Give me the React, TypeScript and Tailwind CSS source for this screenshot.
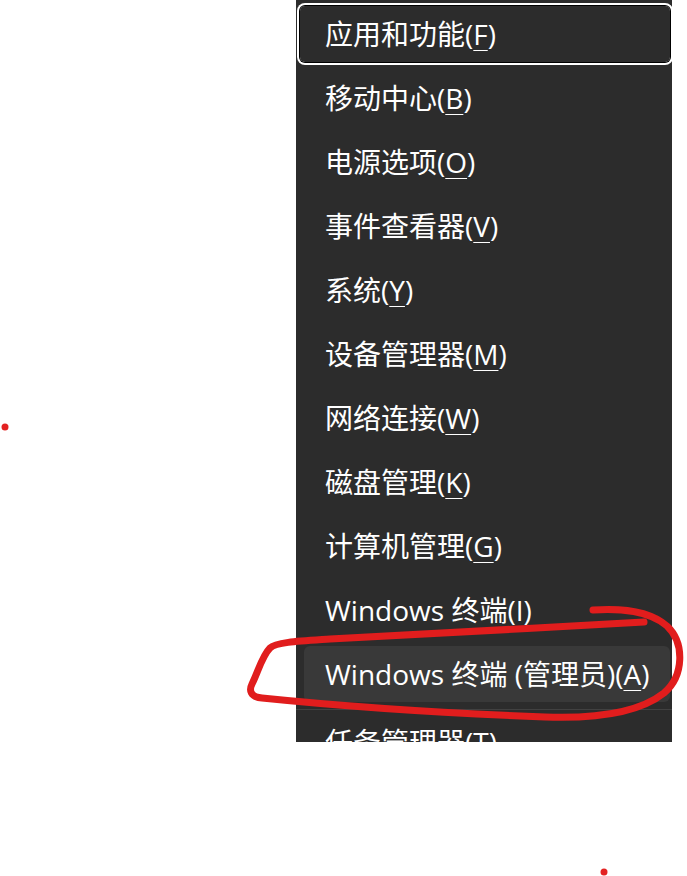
import React from "react";

type Item = { label: string; key: string };

const items: Item[] = [
  { label: "应用和功能", key: "F" },
  { label: "移动中心", key: "B" },
  { label: "电源选项", key: "O" },
  { label: "事件查看器", key: "V" },
  { label: "系统", key: "Y" },
  { label: "设备管理器", key: "M" },
  { label: "网络连接", key: "W" },
  { label: "磁盘管理", key: "K" },
  { label: "计算机管理", key: "G" },
  { label: "Windows 终端", key: "I" },
  { label: "Windows 终端 (管理员)", key: "A" },
];

function Label({ item }: { item: Item }) {
  return (
    <span className="whitespace-nowrap">
      {item.label}(
      <span className="underline decoration-1 underline-offset-[5px]">{item.key}</span>)
    </span>
  );
}

export default function App() {
  return (
    <div
      className="relative w-[687px] h-[876px] bg-white overflow-hidden"
      style={{ fontFamily: '"Open Sans", "Noto Sans CJK SC", sans-serif' }}
    >
      <div className="ml-[296px] w-[376px] h-[742px] overflow-hidden bg-[#2c2c2c] pt-[2px] text-white text-[28px] leading-none">
        {items.map((item, i) => {
          const focus = i === 0;
          const hover = i === 10;
          return (
            <div key={item.key} className="h-16 flex items-center">
              {focus ? (
                <div className="ml-[4px] mr-[2px] flex-1 h-14 rounded-[5px] flex items-center pl-[25px] ring-2 ring-white ring-offset-1 ring-offset-black">
                  <Label item={item} />
                </div>
              ) : (
                <div
                  className={
                    hover
                      ? "ml-2 mr-[2px] flex-1 h-14 rounded-[6px] flex items-center pl-[21px] bg-[#393939]"
                      : "ml-2 mr-[2px] flex-1 h-14 rounded-[6px] flex items-center pl-[21px]"
                  }
                >
                  <Label item={item} />
                </div>
              )}
            </div>
          );
        })}
        <div className="mt-[3px] h-px bg-[#414141]" />
        <div className="h-16 flex items-center">
          <div className="ml-2 flex-1 h-14 flex items-center pl-[21px]">
            <Label item={{ label: "任务管理器", key: "T" }} />
          </div>
        </div>
      </div>

      <svg
        className="absolute inset-0 pointer-events-none"
        width="687"
        height="876"
        viewBox="0 0 687 876"
      >
        <path
          d="M593 610 C620 608 650 611 667 626 C685 643 684 676 664 693 C640 712 600 719 545 717 C440 713 330 705 262 698 C250 697 249 690 252 684 C258 672 262 656 270 648 C276 642 300 641 330 639 C420 634 540 628 644 622"
          fill="none"
          stroke="#e11d1d"
          strokeWidth="7"
          strokeLinecap="round"
          strokeLinejoin="round"
        />
        <circle cx="5" cy="427" r="3.5" fill="#e32222" />
        <circle cx="604" cy="872" r="3.5" fill="#e32222" />
      </svg>
    </div>
  );
}
